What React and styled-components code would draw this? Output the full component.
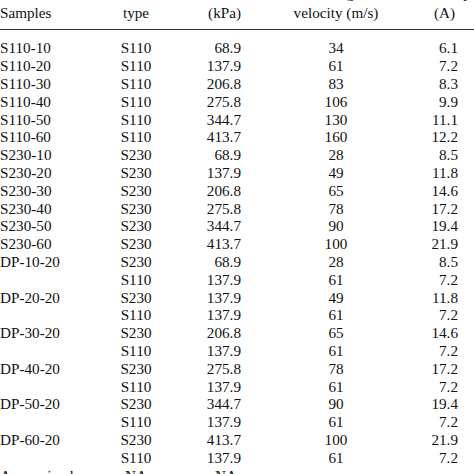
import styled, { createGlobalStyle } from "styled-components";

const GlobalStyle = createGlobalStyle`
  html, body {
    margin: 0;
    padding: 0;
    background: #fff;
    overflow: hidden;
  }
`;

const Sheet = styled.div`
  width: 474px;
  height: 474px;
  overflow: hidden;
  background: #fff;
  color: #111;
  font-family: "Liberation Serif", "Times New Roman", serif;
  font-size: 15.2px;
  line-height: 17.8px;
`;

// the table is cropped at the top, so the first header line only shows descenders
const Table = styled.div`
  display: grid;
  grid-template-columns: 100px 72px 69px 190px 43px;
  margin-top: -16.5px;
`;

const alignMap = { left: "flex-start", center: "center", right: "flex-end" };

const HeadCell = styled.div`
  display: flex;
  flex-direction: column;
  justify-content: flex-end;
  align-items: ${(p) => alignMap[p.$align || "left"]};
  padding-right: ${(p) => (p.$last ? "16px" : "0")};
  padding-bottom: 7px;
  min-width: 0;
  white-space: nowrap;
`;

const TopLine = styled.span`
  margin-bottom: 3px;
`;

const Rule = styled.div`
  grid-column: 1 / -1;
  height: 1px;
  background: #333;
  margin-bottom: 9.3px;
`;

const Cell = styled.div`
  text-align: ${(p) => p.$align || "left"};
  padding-right: ${(p) => p.$pad || "0"};
  white-space: nowrap;
  min-width: 0;
  height: 17.8px;
`;

const rows = [
  ["S110-10", "S110", "68.9", "34", "6.1"],
  ["S110-20", "S110", "137.9", "61", "7.2"],
  ["S110-30", "S110", "206.8", "83", "8.3"],
  ["S110-40", "S110", "275.8", "106", "9.9"],
  ["S110-50", "S110", "344.7", "130", "11.1"],
  ["S110-60", "S110", "413.7", "160", "12.2"],
  ["S230-10", "S230", "68.9", "28", "8.5"],
  ["S230-20", "S230", "137.9", "49", "11.8"],
  ["S230-30", "S230", "206.8", "65", "14.6"],
  ["S230-40", "S230", "275.8", "78", "17.2"],
  ["S230-50", "S230", "344.7", "90", "19.4"],
  ["S230-60", "S230", "413.7", "100", "21.9"],
  ["DP-10-20", "S230", "68.9", "28", "8.5"],
  ["", "S110", "137.9", "61", "7.2"],
  ["DP-20-20", "S230", "137.9", "49", "11.8"],
  ["", "S110", "137.9", "61", "7.2"],
  ["DP-30-20", "S230", "206.8", "65", "14.6"],
  ["", "S110", "137.9", "61", "7.2"],
  ["DP-40-20", "S230", "275.8", "78", "17.2"],
  ["", "S110", "137.9", "61", "7.2"],
  ["DP-50-20", "S230", "344.7", "90", "19.4"],
  ["", "S110", "137.9", "61", "7.2"],
  ["DP-60-20", "S230", "413.7", "100", "21.9"],
  ["", "S110", "137.9", "61", "7.2"],
  ["As-received", "NA", "NA", "", ""],
];

export default function App() {
  return (
    <>
      <GlobalStyle />
      <Sheet>
        <Table>
          <HeadCell>
            <TopLine>&nbsp;</TopLine>
            <span>Samples</span>
          </HeadCell>
          <HeadCell $align="center">
            <TopLine>&nbsp;</TopLine>
            <span>type</span>
          </HeadCell>
          <HeadCell $align="right">
            <TopLine>&nbsp;</TopLine>
            <span>(kPa)</span>
          </HeadCell>
          <HeadCell $align="center">
            <TopLine>Average</TopLine>
            <span>velocity (m/s)</span>
          </HeadCell>
          <HeadCell $align="center" $last>
            <TopLine>Intensity</TopLine>
            <span>(A)</span>
          </HeadCell>
          <Rule />
          {rows.map((r, i) => (
            <Row key={i} cells={r} />
          ))}
        </Table>
      </Sheet>
    </>
  );
}

function Row({ cells }) {
  const [name, type, pressure, velocity, current] = cells;
  return (
    <>
      <Cell>{name}</Cell>
      <Cell $align="center">{type}</Cell>
      <Cell $align="right" $pad={pressure === "NA" ? "4px" : "0"}>
        {pressure}
      </Cell>
      <Cell $align="center">{velocity}</Cell>
      <Cell $align="right" $pad="16px">
        {current}
      </Cell>
    </>
  );
}
